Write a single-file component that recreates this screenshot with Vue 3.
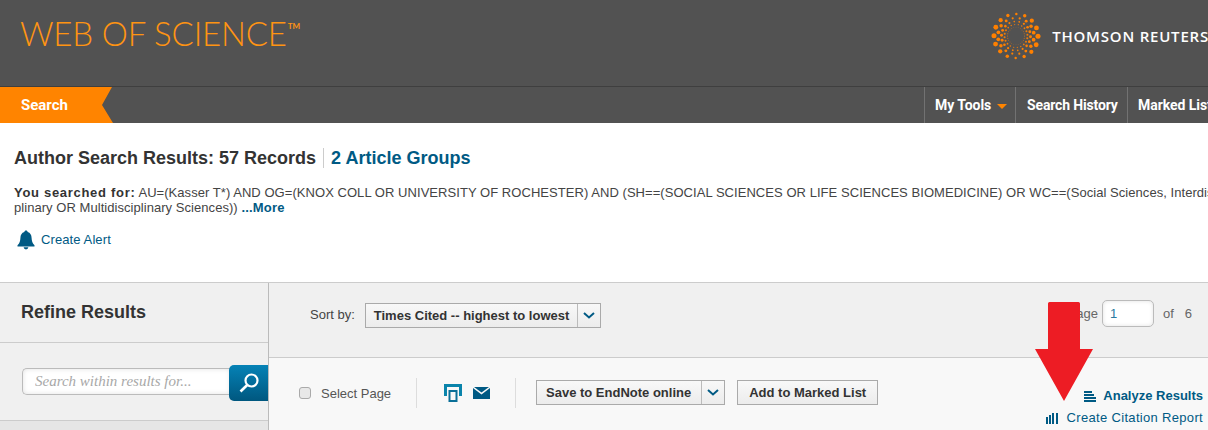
<script setup>
const dots = [];
const rings = [
  { r: 8.5, n: 24, s: 0.5, o: 0.8 },
  { r: 11.5, n: 20, s: 1.0, o: 0.9 },
  { r: 14.5, n: 18, s: 1.4, o: 1 },
  { r: 18, n: 16, s: 1.8, o: 1 },
  { r: 22, n: 16, s: 2.4, o: 1 },
];
rings.forEach((ring, ri) => {
  for (let i = 0; i < ring.n; i++) {
    const a = (i / ring.n) * Math.PI * 2 + ri * 0.2;
    // dots grow toward the left/right of the mark, shrink at the top and bottom
    const k = 0.5 + 0.55 * Math.abs(Math.cos(a));
    dots.push({
      x: 25 + Math.cos(a) * ring.r,
      y: 25 + Math.sin(a) * ring.r,
      r: ring.s * k,
      o: ring.o,
    });
  }
});
</script>

<template>
  <div class="page">
    <header class="top">
      <div class="brand">WEB OF SCIENCE<sup class="tm">TM</sup></div>
      <div class="tr">
        <svg class="tr-mark" width="50" height="50" viewBox="0 0 50 50">
          <circle v-for="(d, i) in dots" :key="i" :cx="d.x" :cy="d.y" :r="d.r" :opacity="d.o" fill="#ff8000" />
        </svg>
        <span class="tr-name">THOMSON REUTERS</span>
      </div>
    </header>

    <nav class="nav">
      <div class="tab">Search</div>
      <div class="nav-right">
        <a class="nav-item tools">My Tools<i class="caret"></i></a>
        <a class="nav-item history">Search History</a>
        <a class="nav-item marked">Marked List</a>
      </div>
    </nav>

    <section class="summary">
      <h1 class="heading">
        <span class="count">Author Search Results: 57 Records</span>
        <span class="groups">2 Article Groups</span>
      </h1>
      <p class="query"><b>You searched for:</b> AU=(Kasser T*) AND OG=(KNOX COLL OR UNIVERSITY OF ROCHESTER) AND (SH==(SOCIAL SCIENCES OR LIFE SCIENCES BIOMEDICINE) OR WC==(Social Sciences, Interdisci<br>plinary OR Multidisciplinary Sciences)) <b class="more">...More</b></p>
      <a class="alert">
        <svg width="18" height="20" viewBox="0 0 18 20">
          <path fill="#005a84" d="M9 0.500c1 0 1.600.7 1.700 1.600C13.300 2.900 14.500 5 14.600 8c.1 3 .8 5.300 2.900 7.200v1.300H.5v-1.300C2.600 13.300 3.300 11 3.400 8c.1-3 1.300-5.100 3.900-5.900C7.400 1.200 8 .5 9 .5zM6.600 17.300h4.800A2.500 2.500 0 0 1 9 19.500a2.500 2.500 0 0 1-2.400-2.200z" />
        </svg>
        <span>Create Alert</span>
      </a>
    </section>

    <div class="results">
      <aside class="side">
        <div class="side-head">Refine Results</div>
        <div class="side-search">
          <input class="within" type="text" placeholder="Search within results for..." />
          <button class="go" aria-label="Search">
            <svg width="22" height="22" viewBox="0 0 22 22" fill="none" stroke="#fff">
              <circle cx="13.500" cy="8.500" r="6" stroke-width="2.200" />
              <path d="M9.200 13 2.500 19.500" stroke-width="2.600" />
            </svg>
          </button>
        </div>
        <div class="side-foot"></div>
      </aside>

      <main class="list">
        <div class="sortbar">
          <span class="sort-label">Sort by:</span>
          <div class="select">
            <span class="select-text">Times Cited -- highest to lowest</span>
            <span class="select-arrow">
              <svg width="12" height="7" viewBox="0 0 12 7" fill="none" stroke="#005a84" stroke-width="2"><path d="M1 1l5 4.500L11 1" /></svg>
            </span>
          </div>
          <div class="pager">
            <span>Page</span>
            <input class="page-input" type="text" value="1" />
            <span class="of">of</span>
            <span>6</span>
          </div>
        </div>

        <div class="actions">
          <label class="select-page"><i class="check"></i>Select Page</label>
          <div class="icons">
            <svg width="18" height="18" viewBox="0 0 18 18">
              <path fill="#0a84ab" d="M0 0h18v12h-3V3H3v9H0z" />
              <path fill="none" stroke="#0a6f98" stroke-width="2" d="M5.500 7h7v10h-7z" />
            </svg>
            <svg width="17" height="12" viewBox="0 0 17 12">
              <path fill="#005a84" d="M0 1l8.500 6.500L17 1v11H0z" />
              <path fill="#005a84" d="M1 0h15L8.500 5.500z" />
            </svg>
          </div>
          <div class="save">
            <span class="select-text">Save to EndNote online</span>
            <span class="select-arrow">
              <svg width="12" height="7" viewBox="0 0 12 7" fill="none" stroke="#005a84" stroke-width="2"><path d="M1 1l5 4.500L11 1" /></svg>
            </span>
          </div>
          <button class="add">Add to Marked List</button>
          <div class="reports">
            <a class="report strong">
              <svg width="12" height="11" viewBox="0 0 12 11" fill="#005a84"><path d="M0 0h8v2H0zM0 3h10v2H0zM0 6h12v2H0zM0 9h12v2H0z" /></svg>
              Analyze Results
            </a>
            <a class="report plain">
              <svg width="12" height="11" viewBox="0 0 12 11" fill="#005a84"><path d="M0 4h2v7H0zM3 2h2v9H3zM6 0h2v11H6zM10 0h2v11h-2z" /></svg>
              Create Citation Report
            </a>
          </div>
        </div>
      </main>
    </div>

    <svg class="red-arrow" width="58" height="99" viewBox="0 0 58 99">
      <path fill="#ed1c24" d="M13 1.500Q13 0 14.500 0h29Q45 0 45 1.500V47h13L29 99 0 47h13z" />
    </svg>
  </div>
</template>

<style>
html, body { margin: 0; overflow: hidden; background: #fff; }
</style>

<style scoped>
.page {
  position: relative;
  width: 1208px;
  height: 430px;
  overflow: hidden;
  font-family: "Liberation Sans", Arial, sans-serif;
  color: #333;
}
.top {
  height: 86px;
  background: #525252;
  border-bottom: 1px solid #3f3f3f;
  display: flex;
  justify-content: space-between;
  white-space: nowrap;
}
.brand {
  font-family: Lato, sans-serif;
  font-weight: 300;
  font-size: 33px;
  line-height: 40px;
  color: #ff9412;
  padding: 13px 0 0 20px;
  letter-spacing: -0.2px;
}
.tm { font-size: 8px; line-height: 0; vertical-align: 17px; font-weight: 700; letter-spacing: 0; margin-left: 1px; }
.tr { display: flex; align-items: flex-start; padding-top: 11px; margin-right: -1px; }
.tr-mark { display: block; margin-right: 11px; }
.tr-name {
  font-family: "Open Sans", sans-serif;
  font-weight: 600;
  font-size: 15px;
  line-height: 20px;
  letter-spacing: 0.8px;
  color: #fff;
  padding-top: 15px;
}
.nav {
  height: 36px;
  background: #525252;
  display: flex;
  justify-content: space-between;
  white-space: nowrap;
}
.tab {
  width: 113px;
  box-sizing: border-box;
  background: #ff8400;
  clip-path: polygon(0 0, 112px 0, 102px 18px, 113px 36px, 0 36px);
  color: #fff;
  font-family: Roboto, sans-serif;
  font-weight: 700;
  font-size: 15px;
  line-height: 36px;
  padding-left: 21px;
}
.nav-right { display: flex; width: 284px; flex: none; }
.nav-item {
  display: flex;
  align-items: center;
  flex: none;
  box-sizing: border-box;
  border-left: 1px solid #727272;
  padding-left: 10px;
  color: #fff;
  font-family: Roboto, sans-serif;
  font-weight: 700;
  font-size: 14px;
  letter-spacing: -0.05px;
}
.tools { width: 91px; }
.history { width: 112px; padding-left: 11px; letter-spacing: -0.15px; }
.marked { width: 81px; }
.caret {
  display: block;
  margin-left: 6px;
  margin-top: 2px;
  border: 5px solid transparent;
  border-top: 5px solid #ff8400;
  border-bottom: 0;
}
.summary { height: 159px; box-sizing: border-box; padding: 25px 0 0 14px; background: #fff; }
.heading { margin: 0; font-size: 18px; line-height: 20px; font-weight: 700; display: flex; white-space: nowrap; color: #333; }
.count { padding-right: 7px; border-right: 1px solid #ccc; }
.groups { padding-left: 7px; color: #005a84; }
.query { margin: 17px 0 0; font-size: 13px; line-height: 15px; letter-spacing: 0.05px; white-space: nowrap; color: #444; }
.query b { color: #333; letter-spacing: 0.7px; }
.query .more { color: #005a84; letter-spacing: 0.2px; }
.alert { display: flex; align-items: center; gap: 6px; margin: 15px 0 0 3px; color: #005a84; font-size: 13px; letter-spacing: 0.1px; line-height: 20px; }
.alert svg { display: block; }
.results { display: flex; height: 148px; border-top: 1px solid #ccc; background: #f0f0f0; }
.side { width: 268px; flex: none; border-right: 1px solid #bbb; display: flex; flex-direction: column; }
.side-head { height: 60px; box-sizing: border-box; border-bottom: 1px solid #ccc; font-weight: 700; font-size: 18px; line-height: 58px; padding-left: 21px; color: #333; }
.side-search { height: 78px; box-sizing: border-box; border-bottom: 1px solid #ccc; display: flex; align-items: flex-start; padding: 22px 0 0 22px; }
.within {
  width: 208px;
  height: 27px;
  box-sizing: border-box;
  margin-top: 3px;
  border: 1px solid #bbb;
  border-right: 0;
  border-radius: 5px 0 0 5px;
  padding: 0 0 0 12px;
  font-family: "Liberation Serif", serif;
  font-style: italic;
  font-size: 15px;
  background: #fff;
  box-shadow: inset 0 0 5px rgba(0, 0, 0, 0.12);
  outline: none;
}
.within::placeholder { color: #a8a8a8; opacity: 1; }
.go {
  width: 39px;
  height: 36px;
  margin-left: -1px;
  border: 0;
  padding: 0;
  border-radius: 5px 0 0 5px;
  background: linear-gradient(#0582b6, #00577f);
  display: flex;
  align-items: center;
  justify-content: center;
  position: relative;
}
.side-foot { flex: 1; background: #e6e6e6; }
.list { flex: 1; min-width: 0; display: flex; flex-direction: column; }
.sortbar { height: 75px; flex: none; box-sizing: border-box; border-bottom: 1px solid #ccc; display: flex; align-items: flex-start; padding: 20px 0 0 41px; font-size: 13px; color: #444; }
.sort-label { line-height: 24px; margin-right: 10px; }
.select, .save { display: flex; height: 25px; box-sizing: border-box; border: 1px solid #aaa; background: linear-gradient(#f8f8f8, #ececec); font-weight: 700; font-size: 13px; color: #333; white-space: nowrap; }
.select-text { line-height: 23px; padding: 0 8px; }
.select-arrow { width: 23px; flex: none; border-left: 1px solid #bbb; display: flex; align-items: center; justify-content: center; box-sizing: border-box; }
.pager { margin-left: auto; margin-top: -3px; margin-right: 16px; display: flex; align-items: center; height: 27px; color: #666; font-size: 13px; }
.page-input { width: 52px; height: 27px; box-sizing: border-box; margin: 0 9px 0 4px; padding: 0 7px; border: 1px solid #bbb; border-radius: 5px; font: 13px "Liberation Sans", sans-serif; color: #2a7aa0; box-shadow: inset 0 0 4px rgba(0, 0, 0, 0.12); outline: none; }
.of { margin-right: 11px; }
.actions { flex: 1; min-height: 0; background: #f8f8f8; display: flex; align-items: flex-start; padding: 20px 0 0 30px; font-size: 13px; }
.select-page { display: flex; align-items: center; height: 30px; width: 117px; border-right: 1px solid #ddd; color: #555; font-size: 13px; flex: none; }
.check { display: block; width: 12px; height: 12px; box-sizing: border-box; border: 1px solid #aaa; border-radius: 3px; background: #e8e8e8; margin-right: 10px; }
.icons { width: 99px; height: 30px; border-right: 1px solid #ddd; flex: none; display: flex; align-items: center; gap: 11px; padding-left: 27px; box-sizing: border-box; }
.icons svg { display: block; }
.save { margin-left: 20px; margin-top: 2px; }
.save .select-text { padding: 0 10px 0 9px; }
.add { margin: 2px 0 0 12px; height: 25px; box-sizing: border-box; border: 1px solid #aaa; background: linear-gradient(#f8f8f8, #ececec); font: 700 13px "Liberation Sans", sans-serif; color: #333; padding: 0 11px; white-space: nowrap; }
.reports { margin-left: auto; margin-right: 5px; margin-top: 10px; display: flex; flex-direction: column; align-items: flex-end; gap: 6px; color: #005a84; font-size: 13px; line-height: 16px; white-space: nowrap; }
.report { display: flex; align-items: center; gap: 7px; }
.report svg { display: block; }
.strong { font-weight: 700; }
.plain { gap: 9px; letter-spacing: 0.32px; }
.red-arrow { position: absolute; left: 1035px; top: 302px; display: block; }
</style>
